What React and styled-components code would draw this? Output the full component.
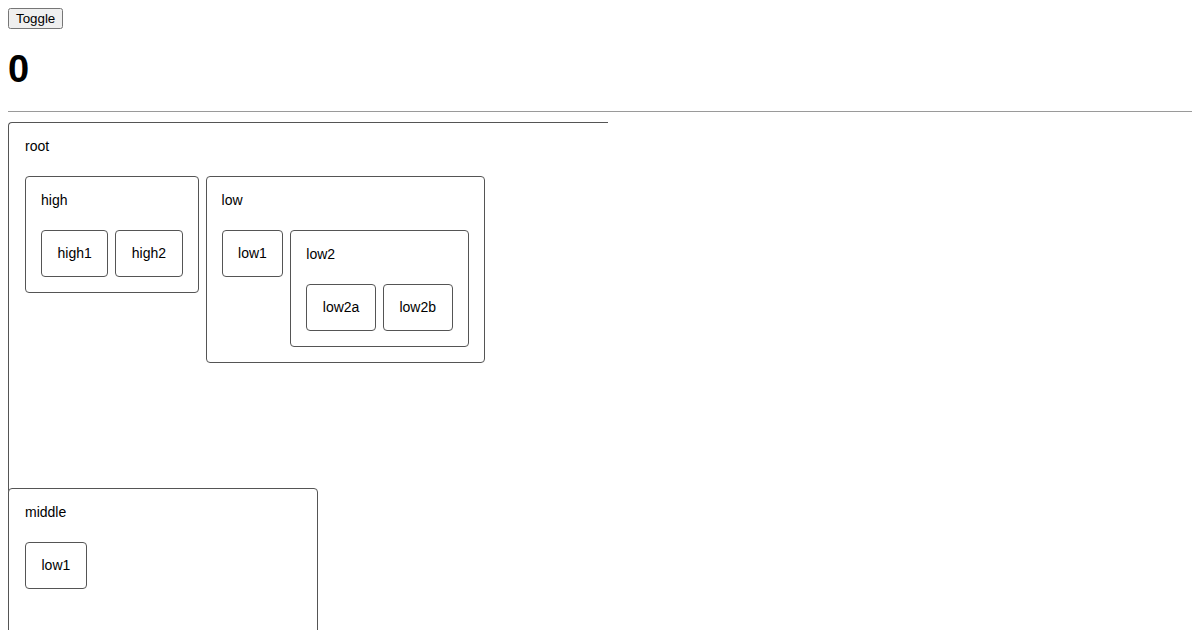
import React, { useState } from "react";
import styled, { createGlobalStyle } from "styled-components";

const GlobalStyle = createGlobalStyle`
  body {
    font-family: "Liberation Sans", Arial, sans-serif;
    color: #000;
    background: #fff;
  }
`;

const Count = styled.h1`
  font-family: "Liberation Sans", Arial, sans-serif;
  font-size: 38px;
  margin: 19px 0 20px;
`;

const Divider = styled.hr`
  border: none;
  border-top: 1px solid #9a9a9a;
  height: 0;
  margin: 0 0 10px;
`;

const Box = styled.div`
  box-sizing: border-box;
  border: 1px solid #555;
  border-radius: 4px;
  padding: 15px;
  font-size: 14px;
  line-height: 16px;
  background: #fff;
`;

const RootBox = styled(Box)`
  position: relative;
  width: 600px;
  min-height: 560px;
  padding-left: 16px;
  border-right: none;
  border-bottom: none;
  border-radius: 4px 0 0 0;
`;

const Overlay = styled(Box)`
  position: absolute;
  left: -1px;
  top: ${(p) => p.$top}px;
  width: ${(p) => p.$width}px;
  min-height: 180px;
  padding-left: 16px;
`;

const Title = styled.div`
  margin-bottom: 22px;
`;

const Row = styled.div`
  display: flex;
  align-items: flex-start;
  gap: 7px;
`;

const Leaf = styled.div`
  box-sizing: border-box;
  border: 1px solid #555;
  border-radius: 4px;
  padding: 14px 15.5px;
  font-size: 14px;
  line-height: 17px;
  white-space: nowrap;
`;

const tree = {
  name: "root",
  children: [
    {
      name: "high",
      children: [{ name: "high1" }, { name: "high2" }],
    },
    {
      name: "low",
      children: [
        { name: "low1" },
        { name: "low2", children: [{ name: "low2a" }, { name: "low2b" }] },
      ],
    },
  ],
};

const moving = { name: "middle", children: [{ name: "low1" }] };

const Node = ({ node }) => {
  if (!node.children) return <Leaf>{node.name}</Leaf>;
  return (
    <Box>
      <Title>{node.name}</Title>
      <Row>
        {node.children.map((child, i) => (
          <Node key={i} node={child} />
        ))}
      </Row>
    </Box>
  );
};

export default function App() {
  const [count, setCount] = useState(0);

  return (
    <>
      <GlobalStyle />
      <button onClick={() => setCount((c) => c)}>Toggle</button>
      <Count>{count}</Count>
      <Divider />
      <RootBox>
        <Title>{tree.name}</Title>
        <Row>
          {tree.children.map((child, i) => (
            <Node key={i} node={child} />
          ))}
        </Row>
        <Overlay $top={365} $width={310}>
          <Title>{moving.name}</Title>
          <Row>
            {moving.children.map((child, i) => (
              <Node key={i} node={child} />
            ))}
          </Row>
        </Overlay>
      </RootBox>
    </>
  );
}
